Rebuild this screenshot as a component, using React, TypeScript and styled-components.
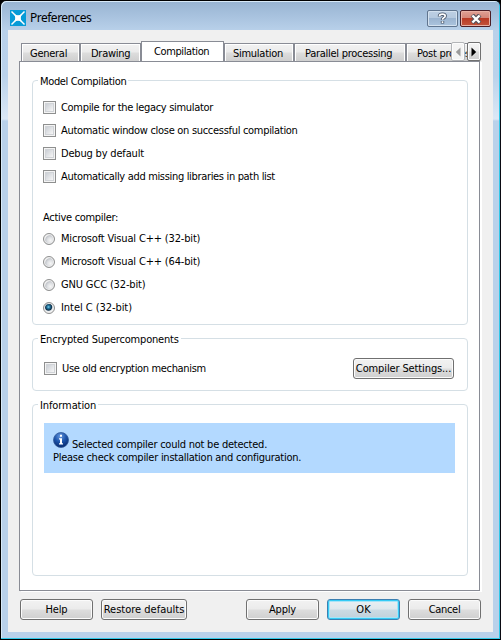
import React from 'react';
import styled, { createGlobalStyle, css } from 'styled-components';

const Global = createGlobalStyle`
  *, *::before, *::after { box-sizing: border-box; }
  html, body { margin: 0; padding: 0; background: #000; overflow: hidden; }
  button { font: inherit; color: inherit; letter-spacing: inherit; }
`;

const Window = styled.div`
  width: 501px;
  height: 640px;
  display: flex;
  flex-direction: column;
  border: 1px solid #000;
  border-right-color: #0a0a12;
  border-radius: 6px 6px 0 0;
  padding: 0 7px 7px 6px;
  background: linear-gradient(#98b4d2 0, #a9c3df 16px, #b9d1ea 30px, #bad2eb 75px, #dbe8f6 118px, #b9d1ea 120px);
  box-shadow: inset -1px -1px 0 #30c8e8, inset 1px 1px 0 #d8eaf8;
  font: 11px/13px 'DejaVu Sans Condensed', 'DejaVu Sans', Tahoma, sans-serif;
  color: #000;
  white-space: nowrap;
`;

const TitleBar = styled.header`
  flex: 0 0 29px;
  display: flex;
  align-items: flex-start;
  padding: 9px 2px 0 3px;
`;

const Title = styled.h1`
  flex: 1;
  margin: -1px 0 0 4px;
  font: 400 12px/18px 'Noto Sans', sans-serif;
  letter-spacing: -0.5px;
`;

const Caption = styled.button<{ $close?: boolean }>`
  width: 31px;
  height: 17px;
  margin-left: 2px;
  padding: 0;
  display: flex;
  align-items: center;
  justify-content: center;
  border: 1px solid ${p => (p.$close ? '#4b1d25' : '#60758f')};
  border-radius: 2px;
  box-shadow: inset 0 0 0 1px ${p => (p.$close ? '#e8b0a4' : '#d3e1ef')};
  background: ${p =>
    p.$close
      ? 'linear-gradient(#dfa095 0, #d58779 45%, #b93a25 50%, #c4553c 100%)'
      : 'linear-gradient(#bdcfe3 0, #b5c9df 45%, #9bb4d0 50%, #abc4de 100%)'};
`;

const Client = styled.main`
  flex: 1;
  display: flex;
  flex-direction: column;
  margin-left: 1px;
  padding: 11px 11px 11px 11px;
  background: #f0f0f0;
`;

const TabStrip = styled.nav`
  position: relative;
  height: 20px;
  margin-right: 1px;
  display: flex;
  align-items: flex-end;
  padding-left: 2px;
  overflow: hidden;
`;

const Tab = styled.div<{ $width: number; $active?: boolean; $pad?: number }>`
  flex: 0 0 ${p => p.$width}px;
  height: 18px;
  padding-left: ${p => p.$pad ?? 9}px;
  border: 1px solid #898c95;
  border-bottom: 0;
  line-height: 19px;
  letter-spacing: -0.27px;
  box-shadow: inset 1px 1px 0 #fff, inset -1px 0 0 #fff;
  background: linear-gradient(#f2f2f2 0, #ebebeb 48%, #dddddd 52%, #cfcfcf 100%);
  ${p =>
    p.$active &&
    css`
      height: 20px;
      background: #fff;
      line-height: 20px;
      letter-spacing: -0.38px;
      box-shadow: 0 1px 0 #fff;
      z-index: 1;
    `}
`;

const Scroller = styled.div`
  position: absolute;
  right: 0;
  top: 1px;
  z-index: 2;
  display: flex;
  gap: 2px;
`;

const ScrollButton = styled.button<{ $disabled?: boolean }>`
  width: 14px;
  height: 19px;
  padding: 0;
  display: flex;
  align-items: center;
  justify-content: center;
  border: 1px solid ${p => (p.$disabled ? '#b3b5b8' : '#707070')};
  border-radius: 2px;
  background: ${p => (p.$disabled ? '#f4f4f4' : 'linear-gradient(#f4f4f4 0, #ebebeb 48%, #dddddd 52%, #cfcfcf 100%)')};
  box-shadow: inset 0 0 0 1px #fcfcfc;
`;

const Panel = styled.section`
  width: 461px;
  height: 530px;
  display: flex;
  flex-direction: column;
  gap: 13px;
  padding: 18px 11px 0 12px;
  border: 1px solid #898c95;
  background: #fff;
  box-shadow: 2px 1px 0 #fff;
`;

const Group = styled.div<{ $height: number }>`
  height: ${p => p.$height}px;
  display: flex;
  flex-direction: column;
  border: 1px solid #d5dfe5;
  border-radius: 4px;
`;

const Legend = styled.h2<{ $tracking?: number }>`
  align-self: flex-start;
  height: 13px;
  margin: -6px 0 0 5px;
  padding: 0 2px;
  background: #fff;
  font: inherit;
  letter-spacing: ${p => p.$tracking ?? 0}px;
`;

const Options = styled.div<{ $top: number }>`
  display: flex;
  flex-direction: column;
  gap: 10px;
  padding: ${p => p.$top}px 0 0 10px;
`;

const Option = styled.label<{ $tracking?: number }>`
  display: flex;
  align-items: center;
  gap: 5px;
  height: 13px;
  letter-spacing: ${p => p.$tracking ?? 0}px;
`;

const Check = styled.span`
  flex: 0 0 13px;
  height: 13px;
  border: 1px solid #8e8f8f;
  background: linear-gradient(135deg, #cbcfd5, #f6f6f6) content-box, #f4f4f4;
  padding: 2px;
  box-shadow: inset 0 0 0 1px #f4f4f4, inset 0 0 0 2px #d0d3d7;
`;

const Radio = styled.span<{ $on?: boolean }>`
  flex: 0 0 12px;
  height: 12px;
  margin-right: 1px;
  border: 1px solid #8e8f8f;
  border-radius: 50%;
  background: ${p =>
    p.$on
      ? 'radial-gradient(circle at 45% 40%, #7fd0ee 0, #23769f 1.5px, #10314a 3.2px, #dfe4e8 4.2px, #f4f4f4 5px)'
      : 'radial-gradient(circle at 65% 65%, #f6f6f6 0, #dfe1e4 3px, #c5c8cd 5px, #f0f0f0 6px)'};
  box-shadow: inset 0 0 0 1px #f0f0f0;
`;

const Subheading = styled.p`
  margin: 28px 0 0 10px;
  height: 13px;
  letter-spacing: -0.3px;
`;

const EncryptionRow = styled.div`
  display: flex;
  align-items: center;
  justify-content: space-between;
  margin: 12px 13px 0 11px;
`;

const Button = styled.button<{ $width: number; $primary?: boolean; $tracking?: number }>`
  flex: 0 0 ${p => p.$width}px;
  height: 21px;
  padding: 0;
  border: 1px solid ${p => (p.$primary ? '#3c7fb1' : '#707070')};
  border-radius: 3px;
  letter-spacing: ${p => p.$tracking ?? 0}px;
  box-shadow: ${p => (p.$primary ? 'inset 0 0 0 1px #35cbf5, inset 0 0 0 2px #a9e4f7' : 'inset 0 0 0 1px #fbfbfb')};
  background: ${p =>
    p.$primary
      ? 'linear-gradient(#eaf0f3 0, #dfe8ed 48%, #cbdbe4 52%, #c0d0da 100%)'
      : 'linear-gradient(#f2f2f2 0, #ebebeb 48%, #dddddd 52%, #cfcfcf 100%)'};
`;

const Notice = styled.div`
  width: 411px;
  height: 50px;
  margin: 11px 0 0 11px;
  padding: 9px 0 0 9px;
  background: #b3d9ff;
`;

const NoticeLine = styled.div<{ $tall?: boolean; $tracking: number }>`
  display: flex;
  align-items: flex-end;
  gap: 3px;
  height: ${p => (p.$tall ? 19 : 13)}px;
  letter-spacing: ${p => p.$tracking}px;
  svg { align-self: flex-start; }
`;

const Footer = styled.footer`
  display: flex;
  gap: 8px;
  margin: 8px 0 0 1px;
`;

const Spacer = styled.span`
  flex: 0 0 43px;
`;

const AppIcon = () => (
  <svg width="16" height="16" viewBox="0 0 16 16">
    <rect width="16" height="16" fill="#079bd7" />
    <path d="M1.5 1.5 5.5 5.5M14.5 1.5 10.5 5.5M1.5 14.5 5.5 10.5M14.5 14.5 10.5 10.5" stroke="#fff" strokeWidth="1.5" />
    <path d="M4 4Q8 6.4 12 4Q9.6 8 12 12Q8 9.6 4 12Q6.4 8 4 4Z" fill="#fff" />
  </svg>
);

const HelpGlyph = () => (
  <svg width="11" height="13" viewBox="0 0 11 13" fill="none">
    <path d="M2.5 4.5V3.8Q2.8 2.2 5.5 2.2T8.2 4Q8.2 5.2 6.5 6Q5.5 6.6 5.5 8M5.5 9V11.6" stroke="#48566a" strokeWidth="3.4" />
    <path d="M2.5 4.3V3.8Q2.8 2.2 5.5 2.2T8.2 4Q8.2 5.2 6.5 6Q5.5 6.6 5.5 7.8M5.5 9.3V11" stroke="#fff" strokeWidth="1.7" />
  </svg>
);

const CloseGlyph = () => (
  <svg width="12" height="10" viewBox="0 0 12 10">
    <path d="M2.2 1 9.8 9M9.8 1 2.2 9" stroke="#57535b" strokeWidth="4.4" />
    <path d="M2.4 1.5 9.6 8.5M9.6 1.5 2.4 8.5" stroke="#fff" strokeWidth="2.4" />
  </svg>
);

const Arrow = ({ left }: { left?: boolean }) => (
  <svg width="6" height="10" viewBox="0 0 6 10">
    <path d={left ? 'M5.5 0.5V9.5L0.8 5Z' : 'M0.5 0.5V9.5L5.2 5Z'} fill={left ? '#9b9b9b' : '#000'} />
  </svg>
);

const InfoIcon = () => (
  <svg width="16" height="16" viewBox="0 0 16 16">
    <defs>
      <radialGradient id="info" cx="45%" cy="25%" r="75%">
        <stop offset="0" stopColor="#6a9be0" />
        <stop offset=".5" stopColor="#1d55ac" />
        <stop offset="1" stopColor="#08296b" />
      </radialGradient>
    </defs>
    <circle cx="8" cy="8" r="7.5" fill="url(#info)" stroke="#315999" strokeWidth=".8" />
    <path d="M7 2.8h2v2H7zM6 6.3h3v5h1v1.2H6v-1.2h1V7.5H6z" fill="#fff" />
  </svg>
);

const checks = [
  { label: 'Compile for the legacy simulator', tracking: -0.31 },
  { label: 'Automatic window close on successful compilation', tracking: -0.3 },
  { label: 'Debug by default', tracking: -0.18 },
  { label: 'Automatically add missing libraries in path list', tracking: -0.33 },
];

const compilers = [
  { label: 'Microsoft Visual C++ (32-bit)', tracking: -0.17 },
  { label: 'Microsoft Visual C++ (64-bit)', tracking: -0.17 },
  { label: 'GNU GCC (32-bit)', tracking: -0.15 },
  { label: 'Intel C (32-bit)', tracking: -0.06 },
];

export default function App() {
  return (
    <>
      <Global />
      <Window>
        <TitleBar>
          <AppIcon />
          <Title>Preferences</Title>
          <Caption aria-label="Help"><HelpGlyph /></Caption>
          <Caption $close aria-label="Close"><CloseGlyph /></Caption>
        </TitleBar>
        <Client>
          <TabStrip>
            <Tab $width={59} $pad={8}>General</Tab>
            <Tab $width={61} $pad={10}>Drawing</Tab>
            <Tab $width={83} $pad={12} $active>Compilation</Tab>
            <Tab $width={70} $pad={8}>Simulation</Tab>
            <Tab $width={112} $pad={10}>Parallel processing</Tab>
            <Tab $width={90} $pad={10}>Post processing</Tab>
            <Scroller>
              <ScrollButton $disabled aria-label="Previous tabs"><Arrow left /></ScrollButton>
              <ScrollButton aria-label="Next tabs"><Arrow /></ScrollButton>
            </Scroller>
          </TabStrip>
          <Panel>
            <Group $height={245}>
              <Legend $tracking={-0.35}>Model Compilation</Legend>
              <Options $top={13}>
                {checks.map(c => <Option key={c.label} $tracking={c.tracking}><Check />{c.label}</Option>)}
              </Options>
              <Subheading>Active compiler:</Subheading>
              <Options $top={8}>
                {compilers.map((c, i) => (
                  <Option key={c.label} $tracking={c.tracking}><Radio $on={i === 3} />{c.label}</Option>
                ))}
              </Options>
            </Group>
            <Group $height={53}>
              <Legend $tracking={-0.19}>Encrypted Supercomponents</Legend>
              <EncryptionRow>
                <Option $tracking={-0.34}><Check />Use old encryption mechanism</Option>
                <Button $width={101} $tracking={-0.12}>Compiler Settings...</Button>
              </EncryptionRow>
            </Group>
            <Group $height={172}>
              <Legend $tracking={-0.1}>Information</Legend>
              <Notice>
                <NoticeLine $tall $tracking={-0.23}><InfoIcon />Selected compiler could not be detected.</NoticeLine>
                <NoticeLine $tracking={-0.26}>Please check compiler installation and configuration.</NoticeLine>
              </Notice>
            </Group>
          </Panel>
          <Footer>
            <Button $width={73} $tracking={-0.2}>Help</Button>
            <Button $width={86}>Restore defaults</Button>
            <Spacer />
            <Button $width={73} $tracking={-0.2}>Apply</Button>
            <Button $width={73} $primary>OK</Button>
            <Button $width={73} $tracking={-0.3}>Cancel</Button>
          </Footer>
        </Client>
      </Window>
    </>
  );
}
